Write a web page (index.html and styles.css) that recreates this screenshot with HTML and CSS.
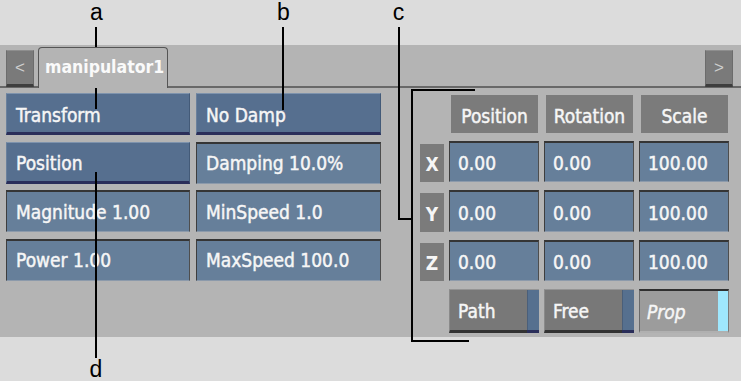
FILE: index.html
```html
<!DOCTYPE html>
<html lang="en">
<head>
<meta charset="utf-8">
<title>manipulator1</title>
<link rel="stylesheet" href="styles.css">
</head>
<body>
<div class="page">
  <div class="top-gap"></div>
  <div class="panel">
    <div class="tabrow">
      <div class="navbtn prev">&lt;</div>
      <div class="tab">manipulator1</div>
      <div class="navbtn next">&gt;</div>
    </div>
    <div class="main">
      <div class="left-grid">
        <div class="btn raised">Transform</div>
        <div class="btn raised">No Damp</div>
        <div class="btn raised">Position</div>
        <div class="btn field">Damping 10.0%</div>
        <div class="btn field">Magnitude 1.00</div>
        <div class="btn field">MinSpeed 1.0</div>
        <div class="btn field">Power 1.00</div>
        <div class="btn field">MaxSpeed 100.0</div>
      </div>
      <div class="right-grid">
        <div class="blank"></div>
        <div class="head">Position</div>
        <div class="head">Rotation</div>
        <div class="head">Scale</div>

        <div class="axis">X</div>
        <div class="btn field">0.00</div>
        <div class="btn field">0.00</div>
        <div class="btn field">100.00</div>

        <div class="axis">Y</div>
        <div class="btn field">0.00</div>
        <div class="btn field">0.00</div>
        <div class="btn field">100.00</div>

        <div class="axis">Z</div>
        <div class="btn field">0.00</div>
        <div class="btn field">0.00</div>
        <div class="btn field">100.00</div>

        <div class="blank"></div>
        <div class="mode grey"><span class="mode-label">Path</span><span class="strip blue"></span></div>
        <div class="mode grey"><span class="mode-label">Free</span><span class="strip blue"></span></div>
        <div class="mode light"><span class="mode-label italic">Prop</span><span class="strip cyan"></span></div>
      </div>
    </div>
  </div>
  <svg class="annot" width="741" height="381" viewBox="0 0 741 381" shape-rendering="crispEdges">
    <text x="96.5" y="20" class="lbl">a</text>
    <text x="283.5" y="20" class="lbl">b</text>
    <text x="398.5" y="20" class="lbl">c</text>
    <text x="96" y="377" class="lbl">d</text>
    <rect x="95" y="27" width="2" height="82" />
    <rect x="282" y="27" width="2" height="83" />
    <rect x="398" y="27" width="2" height="193" />
    <rect x="398" y="218" width="14" height="2" />
    <rect x="411" y="89" width="2" height="253" />
    <rect x="411" y="89" width="64" height="2" />
    <rect x="411" y="340" width="58" height="2" />
    <rect x="95" y="172" width="2" height="186" />
  </svg>
</div>
</body>
</html>
```
FILE: styles.css
```css
html, body {
  margin: 0;
  padding: 0;
}
body {
  background: #dcdcdc;
  font-family: "DejaVu Sans Condensed", "DejaVu Sans", sans-serif;
}
.page {
  position: relative;
  width: 741px;
  height: 381px;
  overflow: hidden;
}
.top-gap {
  height: 45px;
}
.panel {
  height: 292px;
  background: #b4b4b4;
}
.tabrow {
  display: flex;
  align-items: flex-start;
  height: 41px;
  border-bottom: 2px solid #686868;
}
.navbtn {
  box-sizing: border-box;
  width: 28px;
  height: 37px;
  margin-top: 5px;
  background: #7a7a7a;
  border: 1px solid #6c6c6c;
  border-top-color: #8e8e8e;
  border-bottom: 3px solid #3e3e3e;
  color: #cfcfcf;
  font-family: "Liberation Sans", Arial, sans-serif;
  font-size: 17px;
  display: flex;
  align-items: center;
  justify-content: center;
}
.prev {
  margin-left: 6px;
}
.next {
  margin-left: auto;
  margin-right: 8px;
}
.tab {
  box-sizing: border-box;
  width: 130px;
  height: 41px;
  margin-top: 2px;
  margin-left: 4px;
  background: #b4b4b4;
  border: 1px solid #555;
  border-bottom: none;
  border-radius: 4px 4px 0 0;
  padding-left: 6px;
  color: #fafafa;
  font-weight: bold;
  font-size: 17.5px;
  line-height: 38px;
  position: relative;
  z-index: 1;
}
.main {
  display: flex;
  align-items: flex-start;
}
.left-grid {
  display: grid;
  grid-template-columns: 184px 185px;
  grid-template-rows: repeat(4, 42px);
  column-gap: 6px;
  row-gap: 6.5px;
  margin-left: 6px;
  margin-top: 5px;
}
.btn {
  box-sizing: border-box;
  display: flex;
  align-items: center;
  padding-left: 9px;
  color: #f6f6f6;
  font-size: 19px;
  -webkit-text-stroke: 0.45px #f6f6f6;
  white-space: nowrap;
}
.raised {
  padding-top: 3px;
  background: #566f8f;
  border-top: 1px solid #7e93ad;
  border-left: 1px solid #6a809c;
  border-right: 1px solid #435a78;
  border-bottom: 3px solid #2a2e5a;
}
.field {
  background: #667f9a;
  border-top: 2px solid #353535;
  border-left: 1px solid #3e3e3e;
  border-right: 1px solid #4e4e4e;
  border-bottom: 1px solid #8c9aab;
}
.right-grid {
  display: grid;
  grid-template-columns: 24px 90px 90px 90px;
  grid-template-rows: 38px 41px 42px 41px 44px;
  column-gap: 5px;
  row-gap: 8px;
  margin-left: 39px;
  margin-top: 7px;
}
.right-grid .field {
  padding-left: 8px;
  padding-top: 2px;
}
.head {
  box-sizing: border-box;
  margin: 0 1px 0 2px;
  padding-top: 3px;
  background: #7b7b7b;
  color: #f6f6f6;
  font-size: 19px;
  -webkit-text-stroke: 0.45px #f6f6f6;
  display: flex;
  align-items: center;
  justify-content: center;
}
.axis {
  box-sizing: border-box;
  margin-top: 3px;
  padding-top: 2px;
  background: #7b7b7b;
  color: #f6f6f6;
  font-size: 19px;
  font-weight: bold;
  display: flex;
  align-items: center;
  justify-content: center;
}
.mode {
  box-sizing: border-box;
  display: flex;
  color: #f6f6f6;
  font-size: 19px;
  -webkit-text-stroke: 0.45px #f6f6f6;
}
.mode-label {
  flex: 1;
  display: flex;
  align-items: center;
  padding-left: 8px;
  padding-top: 2px;
}
.italic {
  font-style: italic;
  padding-left: 7px;
}
.grey {
  background: #787878;
  border-top: 1px solid #949494;
  border-left: 1px solid #8a8a8a;
  border-bottom: 3px solid #333;
}
.light {
  background: #9c9c9c;
  border-top: 2px solid #2f2f2f;
  border-left: 1px solid #6a6a6a;
  border-right: 1px solid #7a7a7a;
  border-bottom: 2px solid #b0b0b0;
}
.strip {
  flex: none;
  width: 11px;
}
.strip.blue {
  background: #56708f;
  border-left: 1px solid #4a5f7a;
  box-shadow: 0 3px 0 #2a2e5a;
}
.strip.cyan {
  width: 10px;
  background: #9fe7fd;
}
.annot {
  position: absolute;
  left: 0;
  top: 0;
  pointer-events: none;
}
.annot rect {
  fill: #000;
}
.annot .lbl {
  font-family: "Liberation Sans", Arial, sans-serif;
  font-size: 23px;
  fill: #000;
  text-anchor: middle;
}
```
